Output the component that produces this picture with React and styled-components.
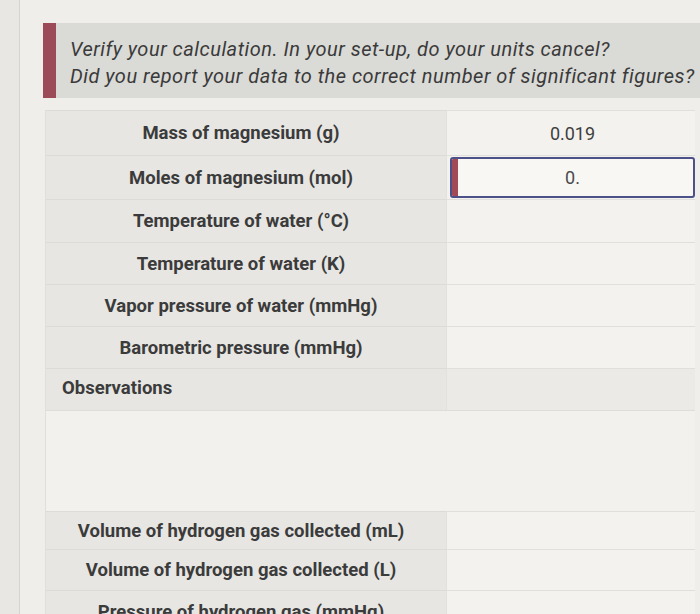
import React from "react";
import styled, { createGlobalStyle } from "styled-components";

const Global = createGlobalStyle`
  html, body { margin: 0; padding: 0; }
  body {
    background: #e8e7e4;
    font-family: Roboto, "Liberation Sans", sans-serif;
    color: #363636;
    overflow: hidden;
  }
  * { box-sizing: border-box; }
`;

const Page = styled.div`
  width: 700px;
  height: 614px;
  overflow: hidden;
  padding-left: 19px;
`;

const Card = styled.div`
  background: #efeeeb;
  border-left: 1px solid #d4d3d0;
  height: 100%;
  padding: 23px 0 0 23px;
`;

const Callout = styled.div`
  display: flex;
  background: #dadad7;
  height: 75px;
`;

const CalloutBar = styled.div`
  width: 13px;
  flex: none;
  background: #9c4a57;
`;

const CalloutText = styled.div`
  padding: 13px 0 0 14px;
  font-style: italic;
  font-size: 20px;
  line-height: 27px;
  letter-spacing: 0.5px;
  color: #3a3a3a;
  white-space: nowrap;
`;

const Table = styled.div`
  margin: 12px 5px 0 2px;
  display: grid;
  grid-template-columns: 400px 1fr;
  background: #ebebe8;
  border-left: 1px solid #e0dfdc;
`;

const Label = styled.div`
  height: ${(p) => p.$h}px;
  display: flex;
  align-items: center;
  justify-content: ${(p) => (p.$left ? "flex-start" : "center")};
  padding-left: ${(p) => (p.$left ? "16px" : "0")};
  padding-right: ${(p) => (p.$left ? "0" : "10px")};
  padding-bottom: ${(p) => (p.$left ? "4px" : "0")};
  font-weight: 700;
  font-size: 18.5px;
  color: #3b3b3b;
  background: #e7e6e3;
  border-top: 1px solid #dcdbd8;
  white-space: nowrap;
`;

const Value = styled.div`
  height: ${(p) => p.$h}px;
  display: flex;
  align-items: center;
  justify-content: center;
  background: ${(p) => (p.$shade ? "#ebeae7" : "#f3f2ef")};
  border-top: 1px solid #e0dfdc;
  border-left: 1px solid #e2e1de;
  font-size: 18px;
  color: #3e3e3e;
  padding: 0 0 0 3px;
`;

const InputBox = styled.div`
  position: relative;
  width: 100%;
  height: 41px;
  border: 2px solid #4d5189;
  border-radius: 3px;
  background: #f8f7f4;
  display: flex;
  align-items: center;
  justify-content: center;
  font-size: 18px;
  color: #4a4a4a;
  overflow: hidden;
`;

const InputFlag = styled.span`
  position: absolute;
  left: 0;
  top: 0;
  bottom: 0;
  width: 6px;
  background: #a24a56;
`;

const Notes = styled.div`
  grid-column: 1 / span 2;
  height: 101px;
  background: #f2f1ee;
  border-top: 1px solid #dedddA;
`;

const rowsTop = [
  ["Mass of magnesium (g)", "0.019", 45],
  ["Moles of magnesium (mol)", "input", 44],
  ["Temperature of water (°C)", "", 43],
  ["Temperature of water (K)", "", 42],
  ["Vapor pressure of water (mmHg)", "", 42],
  ["Barometric pressure (mmHg)", "", 42],
];

const rowsBottom = [
  ["Volume of hydrogen gas collected (mL)", 38],
  ["Volume of hydrogen gas collected (L)", 41],
  ["Pressure of hydrogen gas (mmHg)", 42],
];

export default function App() {
  return (
    <>
      <Global />
      <Page>
        <Card>
          <Callout>
            <CalloutBar />
            <CalloutText>
              Verify your calculation. In your set-up, do your units cancel?
              <br />
              Did you report your data to the correct number of significant figures?
            </CalloutText>
          </Callout>
          <Table>
            {rowsTop.map(([l, v, h]) => (
              <React.Fragment key={l}>
                <Label $h={h}>{l}</Label>
                <Value $h={h}>
                  {v === "input" ? (
                    <InputBox>
                      <InputFlag />
                      0.
                    </InputBox>
                  ) : (
                    v
                  )}
                </Value>
              </React.Fragment>
            ))}
            <Label $left $h={42}>Observations</Label>
            <Value $shade $h={42} />
            <Notes />
            {rowsBottom.map(([l, h]) => (
              <React.Fragment key={l}>
                <Label $h={h}>{l}</Label>
                <Value $h={h} />
              </React.Fragment>
            ))}
          </Table>
        </Card>
      </Page>
    </>
  );
}
